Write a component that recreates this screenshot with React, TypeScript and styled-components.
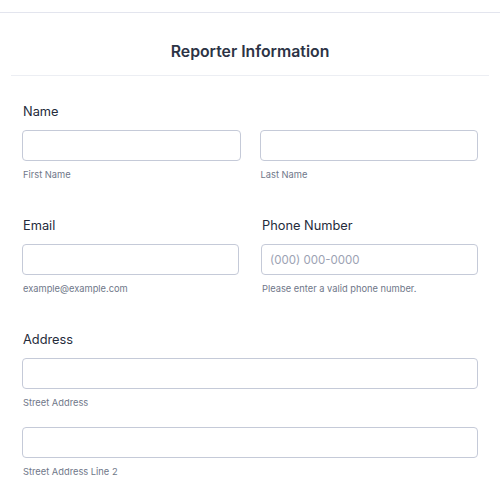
import React from 'react';
import styled, { createGlobalStyle } from 'styled-components';

const GlobalStyle = createGlobalStyle`
  * {
    box-sizing: border-box;
  }

  body {
    margin: 0;
    background: #ffffff;
    font-family: Inter, 'Noto Sans', 'Liberation Sans', sans-serif;
    color: #2c3345;
  }
`;

const Page = styled.div`
  padding-top: 12px;
  width: 500px;
`;

const Card = styled.div`
  border-top: 1px solid #e3e5ee;
  background: #ffffff;
`;

const Header = styled.div`
  margin: 0 11px;
  height: 63px;
  display: flex;
  align-items: flex-end;
  justify-content: center;
  padding-bottom: 13px;
  border-bottom: 1px solid #eceef3;
`;

const Title = styled.h2`
  margin: 0;
  font-size: 15.8px;
  line-height: 20px;
  font-weight: 600;
  color: #2c3345;
`;

const Form = styled.div`
  padding: 27px 22px 0 22px;
  display: flex;
  flex-direction: column;
`;

const Field = styled.div<{ $gap?: number }>`
  margin-bottom: ${({ $gap }) => $gap ?? 35}px;
`;

const Label = styled.div`
  font-size: 12.8px;
  line-height: 18px;
  font-weight: 400;
  color: #252b3b;
  margin-bottom: 9px;
  padding-left: 1px;
`;

const Row = styled.div<{ $gap: number }>`
  display: grid;
  grid-template-columns: 1fr 1fr;
  column-gap: ${({ $gap }) => $gap}px;
`;

const Column = styled.div<{ $top?: number }>`
  display: flex;
  flex-direction: column;
  margin-top: ${({ $top }) => $top ?? 0}px;
`;

const Input = styled.input`
  width: 100%;
  height: 31px;
  border: 1px solid #c5cad8;
  border-radius: 4px;
  padding: 0 8px;
  font-family: inherit;
  font-size: 11.5px;
  color: #2c3345;
  background: #ffffff;
  outline: none;

  &::placeholder {
    color: #9ca2b3;
  }
`;

const SubLabel = styled.div`
  margin-top: 7px;
  font-size: 9.3px;
  line-height: 14px;
  color: #6f7789;
  padding-left: 1px;
`;

const App: React.FC = () => {
  return (
    <>
      <GlobalStyle />
      <Page>
        <Card>
          <Header>
            <Title>Reporter Information</Title>
          </Header>
          <Form>
            <Field>
              <Label>Name</Label>
              <Row $gap={19}>
                <Column>
                  <Input type="text" />
                  <SubLabel>First Name</SubLabel>
                </Column>
                <Column>
                  <Input type="text" />
                  <SubLabel>Last Name</SubLabel>
                </Column>
              </Row>
            </Field>
            <Row $gap={22}>
              <Field>
                <Label>Email</Label>
                <Input type="email" />
                <SubLabel>example@example.com</SubLabel>
              </Field>
              <Field>
                <Label>Phone Number</Label>
                <Input type="tel" placeholder="(000) 000-0000" />
                <SubLabel>Please enter a valid phone number.</SubLabel>
              </Field>
            </Row>
            <Field $gap={0}>
              <Label>Address</Label>
              <Column>
                <Input type="text" />
                <SubLabel>Street Address</SubLabel>
              </Column>
              <Column $top={17}>
                <Input type="text" />
                <SubLabel>Street Address Line 2</SubLabel>
              </Column>
            </Field>
          </Form>
        </Card>
      </Page>
    </>
  );
};

export default App;
